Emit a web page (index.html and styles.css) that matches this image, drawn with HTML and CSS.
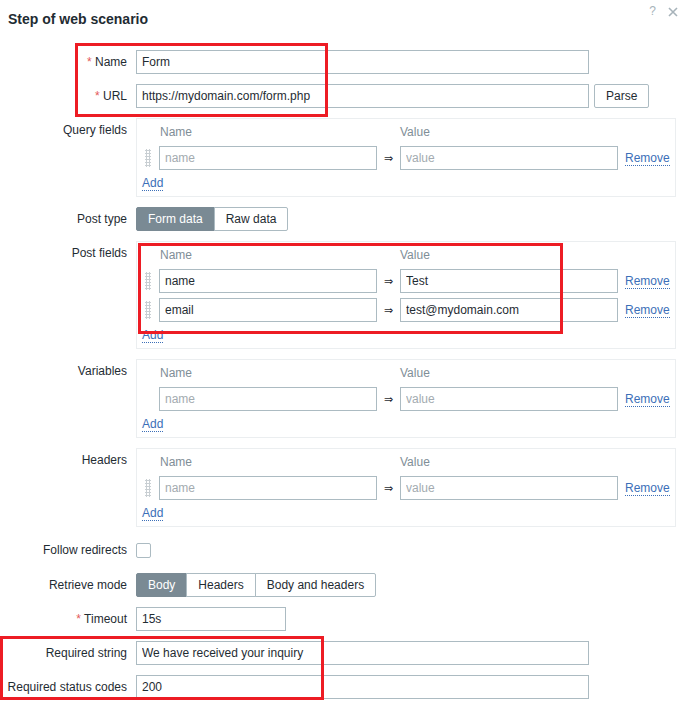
FILE: index.html
```html
<!DOCTYPE html>
<html lang="en">

<head>
    <meta charset="UTF-8">
    <meta name="viewport" content="width=device-width, initial-scale=1.0">
    <title>Step of web scenario</title>
    <link rel="stylesheet" href="styles.css">
</head>

<body>
    <div class="dialog">
        <div class="dialog-head">
            <h4>Step of web scenario</h4>
            <div class="head-btns">
                <span class="btn-help">?</span>
                <svg class="btn-close" width="10" height="10" viewBox="0 0 10 10">
                    <path d="M1 1 L9 9 M9 1 L1 9" stroke="#a7b3ba" stroke-width="1.6" fill="none" />
                </svg>
            </div>
        </div>

        <div class="form-grid">
            <label class="form-label"><span class="req">*</span> Name</label>
            <div class="form-field"><input type="text" class="input-wide" value="Form"></div>

            <label class="form-label"><span class="req">*</span> URL</label>
            <div class="form-field">
                <input type="text" class="input-wide" value="https://mydomain.com/form.php">
                <button class="btn-alt">Parse</button>
            </div>

            <label class="form-label">Query fields</label>
            <div class="form-field">
                <div class="pair-box">
                    <div class="pair-head"><span></span><span>Name</span><span></span><span>Value</span></div>
                    <div class="pair-row">
                        <span class="drag"></span>
                        <input type="text" placeholder="name">
                        <span class="arrow">&rArr;</span>
                        <input type="text" placeholder="value">
                        <a href="#" class="link">Remove</a>
                    </div>
                    <div class="pair-add"><a href="#" class="link">Add</a></div>
                </div>
            </div>

            <label class="form-label">Post type</label>
            <div class="form-field">
                <div class="radio-seg">
                    <span class="seg selected">Form data</span>
                    <span class="seg">Raw data</span>
                </div>
            </div>

            <label class="form-label">Post fields</label>
            <div class="form-field">
                <div class="pair-box">
                    <div class="pair-head"><span></span><span>Name</span><span></span><span>Value</span></div>
                    <div class="pair-row">
                        <span class="drag"></span>
                        <input type="text" value="name">
                        <span class="arrow">&rArr;</span>
                        <input type="text" value="Test">
                        <a href="#" class="link">Remove</a>
                    </div>
                    <div class="pair-row">
                        <span class="drag"></span>
                        <input type="text" value="email">
                        <span class="arrow">&rArr;</span>
                        <input type="text" value="test@mydomain.com">
                        <a href="#" class="link">Remove</a>
                    </div>
                    <div class="pair-add"><a href="#" class="link">Add</a></div>
                </div>
            </div>

            <label class="form-label">Variables</label>
            <div class="form-field">
                <div class="pair-box">
                    <div class="pair-head"><span></span><span>Name</span><span></span><span>Value</span></div>
                    <div class="pair-row">
                        <span class="drag no-drag"></span>
                        <input type="text" placeholder="name">
                        <span class="arrow">&rArr;</span>
                        <input type="text" placeholder="value">
                        <a href="#" class="link">Remove</a>
                    </div>
                    <div class="pair-add"><a href="#" class="link">Add</a></div>
                </div>
            </div>

            <label class="form-label">Headers</label>
            <div class="form-field">
                <div class="pair-box">
                    <div class="pair-head"><span></span><span>Name</span><span></span><span>Value</span></div>
                    <div class="pair-row">
                        <span class="drag"></span>
                        <input type="text" placeholder="name">
                        <span class="arrow">&rArr;</span>
                        <input type="text" placeholder="value">
                        <a href="#" class="link">Remove</a>
                    </div>
                    <div class="pair-add"><a href="#" class="link">Add</a></div>
                </div>
            </div>

            <label class="form-label check-label">Follow redirects</label>
            <div class="form-field check-field"><span class="checkbox"></span></div>

            <label class="form-label">Retrieve mode</label>
            <div class="form-field">
                <div class="radio-seg">
                    <span class="seg selected">Body</span>
                    <span class="seg">Headers</span>
                    <span class="seg">Body and headers</span>
                </div>
            </div>

            <label class="form-label"><span class="req">*</span> Timeout</label>
            <div class="form-field"><input type="text" class="input-small" value="15s"></div>

            <label class="form-label">Required string</label>
            <div class="form-field"><input type="text" class="input-wide" value="We have received your inquiry"></div>

            <label class="form-label">Required status codes</label>
            <div class="form-field"><input type="text" class="input-wide" value="200"></div>
        </div>

        <!-- annotation marks drawn over the form -->
        <div class="mark mark-1"></div>
        <div class="mark mark-2"></div>
        <div class="mark mark-3"></div>
    </div>
</body>

</html>
```

FILE: styles.css
```css
body {
    margin: 0;
    background-color: #fff;
    font-family: "Liberation Sans", Arial, sans-serif;
    font-size: 12px;
    color: #1f2c33;
}

.dialog {
    position: relative;
    width: 683px;
    height: 704px;
    overflow: hidden;
}

.dialog-head {
    padding: 8px 8px 0;
}

.dialog-head h4 {
    margin: 0;
    font-size: 14px;
    line-height: 22px;
    font-weight: bold;
}

.head-btns {
    position: absolute;
    top: 4px;
    right: 5px;
    display: flex;
    align-items: center;
    gap: 12px;
}

.btn-help {
    color: #a7b3ba;
    font-size: 12px;
    line-height: 14px;
}

.btn-close {
    margin-top: 1px;
}

.form-grid {
    display: grid;
    grid-template-columns: 127px 1fr;
    column-gap: 9px;
    row-gap: 10px;
    margin-top: 20px;
}

.form-label {
    line-height: 24px;
    text-align: right;
    white-space: nowrap;
}

.req {
    color: #e45959;
}

.form-field {
    display: flex;
    align-items: flex-start;
}

input[type="text"] {
    height: 24px;
    box-sizing: border-box; /* border is part of the 24px */
    margin: 0;
    padding: 0 5px;
    border: 1px solid #acbbc2;
    border-radius: 0;
    font-family: inherit;
    font-size: 12px;
    color: #1f2c33;
    background-color: #fff;
}

input::placeholder {
    color: #a3abb0;
}

.input-wide {
    width: 453px;
}

.input-small {
    width: 150px;
}

.btn-alt {
    height: 24px;
    margin-left: 5px;
    padding: 0 11px;
    border: 1px solid #acbbc2;
    border-radius: 2px;
    background-color: #fff;
    font-family: inherit;
    font-size: 12px;
    color: #1f2c33;
}

.pair-box {
    width: 540px;
    box-sizing: border-box;
    border: 1px solid #ebeef0;
    padding: 3px 4px 3px 5px;
}

.pair-head,
.pair-row {
    display: grid;
    grid-template-columns: 17px 218px 23px 218px auto;
    align-items: center;
}

.pair-head {
    height: 20px;
    color: #7f8e97;
    margin-bottom: 4px;
}

.pair-head span:nth-child(2) {
    padding-left: 1px;
}

.pair-row {
    height: 24px;
}

.pair-row + .pair-row {
    margin-top: 5px;
}

.pair-row input {
    width: 218px;
}

.drag {
    width: 6px;
    height: 18px;
    margin-left: 3px;
    background: radial-gradient(circle, #c9cfd3 1px, transparent 1.3px) 0 0 / 3px 3px;
}

.drag.no-drag {
    visibility: hidden;
}

.arrow {
    text-align: center;
    font-family: "DejaVu Sans", sans-serif;
    font-size: 11px;
}

.pair-row .link {
    margin-left: 7px;
    justify-self: start;
}

.pair-add {
    margin-top: 4px;
    line-height: 19px;
}

.link {
    color: #3c6fb8;
    text-decoration: none;
    border-bottom: 1px dotted #3c6fb8;
}

.check-label,
.check-field {
    height: 26px;
    line-height: 26px;
}

.check-field {
    align-items: center;
}

.checkbox {
    display: block;
    width: 15px;
    height: 15px;
    box-sizing: border-box;
    border: 1px solid #acbbc2;
    border-radius: 2px;
    background-color: #fff;
}

.radio-seg {
    display: flex;
}

.seg {
    height: 24px;
    box-sizing: border-box;
    line-height: 22px;
    padding: 0 11px;
    border: 1px solid #acbbc2;
    margin-left: -1px;
    background-color: #fff;
}

.seg:first-child {
    margin-left: 0;
    border-radius: 2px 0 0 2px;
}

.seg:last-child {
    border-radius: 0 2px 2px 0;
}

.seg.selected {
    background-color: #7a8a94;
    border-color: #7a8a94;
    color: #fff;
}

.mark {
    position: absolute;
    box-sizing: border-box;
    border: 3px solid #ed1c24;
}

.mark-1 {
    left: 75px;
    top: 43px;
    width: 253px;
    height: 74px;
}

.mark-2 {
    left: 138px;
    top: 243px;
    width: 425px;
    height: 91px;
}

.mark-3 {
    left: 0;
    top: 636px;
    width: 324px;
    height: 64px;
}
```
